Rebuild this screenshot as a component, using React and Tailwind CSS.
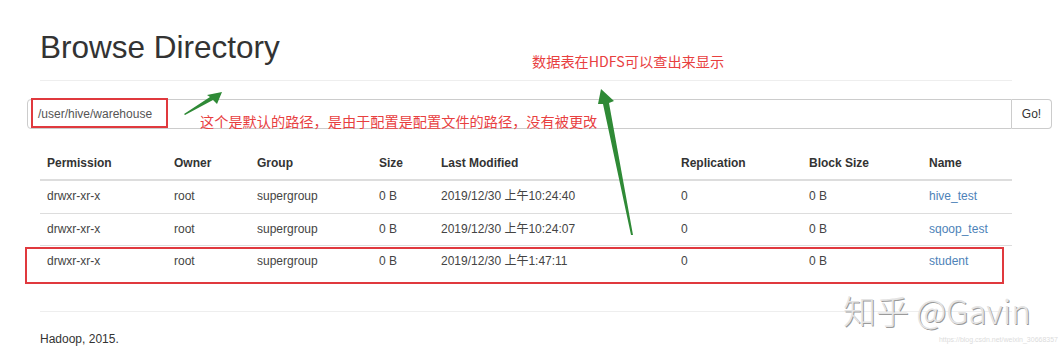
const rows = [
  { perm: "drwxr-xr-x", owner: "root", group: "supergroup", size: "0 B", modified: "2019/12/30 上午10:24:40", repl: "0", block: "0 B", name: "hive_test" },
  { perm: "drwxr-xr-x", owner: "root", group: "supergroup", size: "0 B", modified: "2019/12/30 上午10:24:07", repl: "0", block: "0 B", name: "sqoop_test" },
  { perm: "drwxr-xr-x", owner: "root", group: "supergroup", size: "0 B", modified: "2019/12/30 上午1:47:11", repl: "0", block: "0 B", name: "student" },
];

const cols = [
  { key: "perm", label: "Permission", w: "w-[127px]" },
  { key: "owner", label: "Owner", w: "w-[83px]" },
  { key: "group", label: "Group", w: "w-[122px]" },
  { key: "size", label: "Size", w: "w-[62px]" },
  { key: "modified", label: "Last Modified", w: "w-[240px]" },
  { key: "repl", label: "Replication", w: "w-[128px]" },
  { key: "block", label: "Block Size", w: "w-[120px]" },
  { key: "name", label: "Name", w: "w-[90px]" },
];

function Arrows() {
  return (
    <svg className="absolute inset-0 pointer-events-none" width="1061" height="360">
      <polygon points="222,92 217,104 213,100 185,115 184,114 210,97 207,95" fill="#2f8a36" />
      <polygon points="601,89 614,101 609,103 633,235 631,235 603,104 598,104" fill="#2f8a36" />
    </svg>
  );
}

export default function App() {
  return (
    <div className="relative w-[1061px] h-[360px] bg-white overflow-hidden font-['Liberation_Sans',Arial,'Noto_Sans_CJK_SC',sans-serif] text-[#333]">
      <div className="pt-[29px] px-[40px] w-[1052px]">
        <h1 className="text-[31.5px] leading-[36px] text-[#333]">Browse Directory</h1>
        <div className="mt-[15px] border-t border-[#eee]"></div>
      </div>

      <div className="mt-[18px] ml-[27px] w-[1025px] h-[30px] flex text-[12px]">
        <div className="flex-1 border border-[#ccc] rounded-l-[4px] flex items-center pl-[10px] text-[#555]">
          /user/hive/warehouse
        </div>
        <div className="w-[40px] border border-l-0 border-[#ccc] rounded-r-[4px] bg-white flex items-center justify-center text-[#333]">
          Go!
        </div>
      </div>

      <div className="px-[40px] mt-[18px]">
        <table className="w-[972px] table-fixed border-collapse text-[12px]">
          <thead>
            <tr className="border-b-2 border-[#ddd]">
              {cols.map((c) => (
                <th key={c.key} className={`${c.w} text-left font-bold px-[7px] py-[8px] leading-[16px] text-[#333]`}>
                  {c.label}
                </th>
              ))}
            </tr>
          </thead>
          <tbody>
            {rows.map((r, i) => (
              <tr key={i} className={i < rows.length - 1 ? "border-b border-[#ddd]" : ""}>
                {cols.map((c) => (
                  <td key={c.key} className={`px-[7px] py-[8px] leading-[15.5px] ${c.key === "name" ? "text-[#4d82b8]" : "text-[#444]"}`}>
                    {r[c.key]}
                  </td>
                ))}
              </tr>
            ))}
          </tbody>
        </table>
      </div>

      <div className="px-[40px] w-[1052px] mt-[33px]">
        <div className="border-t border-[#eee]"></div>
        <p className="mt-[18px] w-fit text-[12px] text-[#333]">Hadoop, 2015.</p>
      </div>

      {/* annotations */}
      <div className="absolute left-[31px] top-[98px] w-[137px] h-[30px] border-2 border-[#e0393e]"></div>
      <div className="absolute left-[25px] top-[247px] w-[979px] h-[37px] border-2 border-[#e0393e]"></div>
      <div className="absolute left-[200px] top-[111px] text-[14.2px] leading-[20px] text-[#e8403f] font-['Noto_Sans_CJK_SC',sans-serif]">
        这个是默认的路径，是由于配置是配置文件的路径，没有被更改
      </div>
      <div className="absolute left-[532px] top-[51px] text-[14.2px] leading-[20px] text-[#e8403f] font-['Noto_Sans_CJK_SC',sans-serif]">
        数据表在HDFS可以查出来显示
      </div>
      <Arrows />

      {/* watermark */}
      <div className="absolute left-[843px] top-[292px] flex flex-col items-end w-[215px]">
        <div className="self-start text-[33px] leading-[36px] text-[#e4e4e4] [text-shadow:1px_1px_0_#9a9a9a] font-['Noto_Sans_CJK_SC',sans-serif] font-light">
          知乎 @Gavin
        </div>
        <div className="mt-[8px] text-[7px] leading-[8px] text-[#dcdcdc]">
          https://blog.csdn.net/weixin_30668357
        </div>
      </div>
    </div>
  );
}
